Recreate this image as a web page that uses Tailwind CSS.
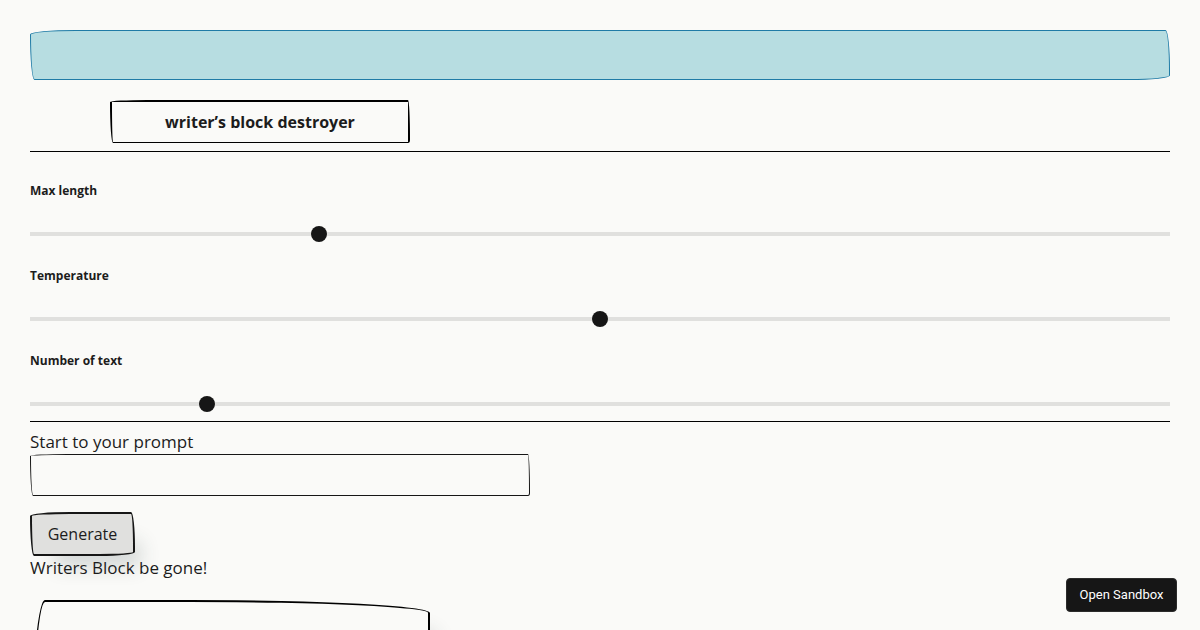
<!DOCTYPE html>
<html lang="en">
<head>
<meta charset="utf-8">
<meta name="viewport" content="width=device-width, initial-scale=1">
<title>writer's block destroyer</title>
<script src="https://cdn.jsdelivr.net/npm/@tailwindcss/browser@4"></script>
</head>
<body class="bg-[#fafaf8] p-[30px] font-['Open_Sans',sans-serif] text-[17px] text-[#1c1c1c]">
<header>
  <div class="h-[50px] border border-[#1f7ba6] bg-[#b7dde1] rounded-[255px_25px_225px_25px/25px_225px_25px_255px]"></div>
  <h1 class="mt-5 ml-20 flex h-[43px] w-[300px] items-center justify-center border-2 border-b border-black text-base font-bold rounded-[37px_2px_2px_3px/2px_38px_3px_40px]">writer’s block destroyer</h1>
</header>
<main>
  <form>
    <section class="mt-2 flex flex-col gap-[22px] border-y border-black pt-[29px] pb-[7px]">
      <div class="flex flex-col gap-[23px]">
        <label for="length" class="text-xs leading-5 font-bold">Max length</label>
        <input id="length" type="range" min="0" max="100" value="25" class="block h-5 w-full appearance-none bg-transparent [&::-webkit-slider-runnable-track]:h-1 [&::-webkit-slider-runnable-track]:bg-[#e0e0de] [&::-webkit-slider-thumb]:-mt-1.5 [&::-webkit-slider-thumb]:size-4 [&::-webkit-slider-thumb]:appearance-none [&::-webkit-slider-thumb]:rounded-full [&::-webkit-slider-thumb]:bg-[#161616]">
      </div>
      <div class="flex flex-col gap-[23px]">
        <label for="temperature" class="text-xs leading-5 font-bold">Temperature</label>
        <input id="temperature" type="range" min="0" max="100" value="50" class="block h-5 w-full appearance-none bg-transparent [&::-webkit-slider-runnable-track]:h-1 [&::-webkit-slider-runnable-track]:bg-[#e0e0de] [&::-webkit-slider-thumb]:-mt-1.5 [&::-webkit-slider-thumb]:size-4 [&::-webkit-slider-thumb]:appearance-none [&::-webkit-slider-thumb]:rounded-full [&::-webkit-slider-thumb]:bg-[#161616]">
      </div>
      <div class="flex flex-col gap-[23px]">
        <label for="count" class="text-xs leading-5 font-bold">Number of text</label>
        <input id="count" type="range" min="0" max="100" value="15" class="block h-5 w-full appearance-none bg-transparent [&::-webkit-slider-runnable-track]:h-1 [&::-webkit-slider-runnable-track]:bg-[#e0e0de] [&::-webkit-slider-thumb]:-mt-1.5 [&::-webkit-slider-thumb]:size-4 [&::-webkit-slider-thumb]:appearance-none [&::-webkit-slider-thumb]:rounded-full [&::-webkit-slider-thumb]:bg-[#161616]">
      </div>
    </section>
    <label for="prompt" class="mt-2 block leading-6">Start to your prompt</label>
    <input id="prompt" type="text" class="block h-[42px] w-[500px] max-w-full border border-[#161616] px-2 outline-none rounded-[37px_2px_2px_3px/2px_38px_3px_40px]">
    <button type="button" class="mt-4 block h-11 w-[105px] border-2 border-[#161616] bg-[#e0e0de] text-base shadow-[15px_20px_20px_-10px_rgba(45,65,63,0.2)] rounded-[255px_25px_225px_25px/25px_225px_25px_255px]">Generate</button>
  </form>
  <p class="leading-6">Writers Block be gone!</p>
  <div class="mt-5 h-[300px] w-[400px] max-w-full border-2 border-black shadow-[15px_20px_20px_-10px_rgba(45,65,63,0.2)] rounded-[15px_240px_15px_225px/195px_13px_225px_15px]"></div>
</main>
<a href="#" class="fixed right-[23px] bottom-[18px] flex h-[34px] w-[111px] items-center justify-center rounded border border-[#2b2b2b] bg-[#161616] font-[Roboto,sans-serif] text-[13px] text-white">Open Sandbox</a>
</body>
</html>
